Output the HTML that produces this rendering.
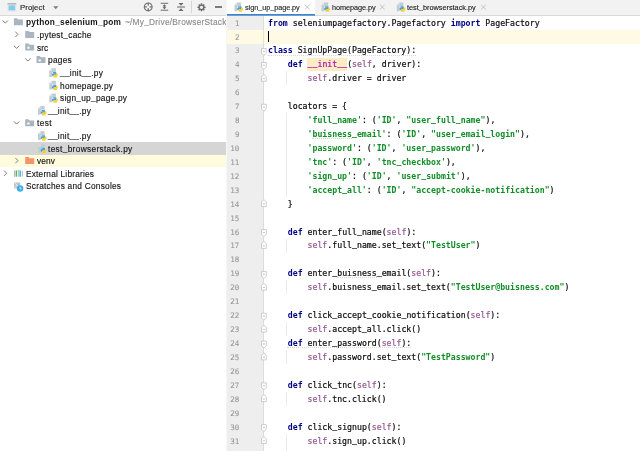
<!DOCTYPE html>
<html><head><meta charset="utf-8"><title>PyCharm</title>
<style>
html,body{margin:0;padding:0;}
body{width:640px;height:451px;overflow:hidden;background:#fff;position:relative;font-family:"Liberation Sans",sans-serif;}
.abs{position:absolute;}
svg{position:absolute;overflow:visible;}
#left{position:absolute;left:0;top:0;width:226px;height:451px;background:#fff;overflow:hidden;}
#ltool{position:absolute;left:0;top:0;width:226px;height:15px;background:#f2f2f2;border-bottom:1px solid #d9d9d9;}
.row{position:absolute;left:0;width:226px;height:12.6px;}
.lbl{-webkit-text-stroke:0.15px;will-change:transform;position:absolute;white-space:nowrap;font-size:8.3px;letter-spacing:0.2px;line-height:12.6px;color:#151515;top:0.5px;margin-left:-0.35px;}
.lbl b{font-weight:bold;-webkit-text-stroke:0;letter-spacing:0.25px;}
.lbl .g{color:#8c8c8c;}
#div{position:absolute;left:226px;top:0;width:1px;height:451px;background:#f6f6f6;}
#ed{position:absolute;left:227px;top:0;width:413px;height:451px;background:#fff;overflow:hidden;}
#tabs{position:absolute;left:0;top:0;width:413px;height:15px;background:#f2f2f2;border-bottom:1px solid #d9d9d9;}
.tab{-webkit-text-stroke:0.12px;will-change:transform;position:absolute;height:14px;font-size:7.3px;letter-spacing:-0.06px;line-height:14px;top:0.5px;color:#1c1c1c;white-space:nowrap;}
.x{position:absolute;top:0;font-size:9px;line-height:14px;color:#b0b0b0;}
#gut{position:absolute;left:0;top:16px;width:36px;height:436px;background:#eeeeee;border-right:1px solid #dcdcdc;}
.ln{position:absolute;left:0;width:12.4px;text-align:right;font-family:"DejaVu Sans Mono","Liberation Mono",monospace;font-size:7.5px;color:#999;-webkit-text-stroke:0.1px;white-space:nowrap;will-change:transform;}
.cl{-webkit-text-stroke:0.2px;position:absolute;left:40.85px;will-change:transform;white-space:pre;font-family:"DejaVu Sans Mono","Liberation Mono",monospace;font-size:8.21px;color:#0c0c0c;height:13.93px;line-height:13.93px;}
i{font-style:normal;position:relative;top:-1.1px;}
.lbl i,.tab i{top:-0.9px;}
.lbl b i{top:-0.3px;}
.kw{color:#000080;font-weight:bold;-webkit-text-stroke:0;}
.s{color:#128c28;font-weight:bold;-webkit-text-stroke:0;}
.self{color:#94558d;}
.init{color:#b200b2;}
</style></head><body>
<div id="left"><div id="ltool">
<svg style="left:7px;top:3px" width="9" height="9" viewBox="0 0 9 9"><g transform="translate(0.60 0.00)"><rect x="0" y="0" width="8.6" height="8.5" fill="#dfe4e8"/><rect x="0" y="0" width="8.6" height="1.5" fill="#aeb9c1"/><rect x="1.2" y="2.5" width="6.2" height="4.7" fill="#7fcdec"/></g></svg>
<div class="lbl" style="left:20px;top:1.7px;color:#2a2a2a;font-size:7.8px;letter-spacing:0.05px">Project</div>
<svg style="left:53px;top:6px" width="6" height="4" viewBox="0 0 6 4"><g transform="translate(0.00 0.00)"><path d="M0.3 0.3H5.3L2.8 3.2Z" fill="#7a7a7a"/></g></svg>
<svg style="left:143px;top:2px" width="9" height="9" viewBox="0 0 9 9"><g transform="translate(0.70 0.40)"><circle cx="4.5" cy="4.5" r="3.95" fill="none" stroke="#6e6e6e" stroke-width="1.05"/><path d="M4.5 0.6V3.1M4.5 5.9V8.4M0.6 4.5H3.1M5.9 4.5H8.4" stroke="#6e6e6e" stroke-width="1.3"/></g></svg>
<svg style="left:160px;top:2px" width="8" height="8" viewBox="0 0 8 8"><g transform="translate(0.70 0.80)"><path d="M0 0.5H7.5M0 7.4H7.5" stroke="#6e6e6e" stroke-width="1"/><path d="M3.75 1.5L5.7 3.5H4.5V4.4H5.7L3.75 6.4L1.8 4.4H3V3.5H1.8Z" fill="#6e6e6e"/></g></svg>
<svg style="left:177px;top:2px" width="8" height="9" viewBox="0 0 8 9"><g transform="translate(0.10 0.50)"><path d="M0 4.5H7.8" stroke="#6e6e6e" stroke-width="1.1"/><path d="M3.9 3.3L6.1 1.1V0.5H1.7V1.1ZM3.9 5.7L6.1 7.9V8.5H1.7V7.9Z" fill="#6e6e6e"/></g></svg>
<div class="abs" style="left:191px;top:1px;width:1px;height:12px;background:#d6d6d6"></div>
<svg style="left:197px;top:2px" width="9" height="9" viewBox="0 0 9 9"><g transform="translate(0.00 0.80)"><path d="M3.81 0.46L5.19 0.46L5.33 1.62L5.95 1.88L6.87 1.15L7.85 2.13L7.12 3.05L7.38 3.67L8.54 3.81L8.54 5.19L7.38 5.33L7.12 5.95L7.85 6.87L6.87 7.85L5.95 7.12L5.33 7.38L5.19 8.54L3.81 8.54L3.67 7.38L3.05 7.12L2.13 7.85L1.15 6.87L1.88 5.95L1.62 5.33L0.46 5.19L0.46 3.81L1.62 3.67L1.88 3.05L1.15 2.13L2.13 1.15L3.05 1.88L3.67 1.62Z M4.5 2.9A1.6 1.6 0 1 0 4.5 6.1A1.6 1.6 0 1 0 4.5 2.9Z" fill="#6e6e6e" fill-rule="evenodd"/></g></svg>
<div class="abs" style="left:214.5px;top:6.2px;width:7.7px;height:1.4px;background:#7c7c7c"></div>
</div>
<svg style="left:2px;top:20px" width="6" height="4" viewBox="0 0 6 4"><g transform="translate(0.30 0.05)"><path d="M0.3 0.4L3 3.1L5.7 0.4" fill="none" stroke="#757575" stroke-width="0.95"/></g></svg>
<svg style="left:13px;top:18px" width="9" height="7" viewBox="0 0 9 7"><g transform="translate(0.90 0.26)"><path d="M0 0H3.3L4.4 1.2H9V7H0Z" fill="#aab6bf"/></g></svg>
<div class="lbl" style="left:26.00px;top:16.40px;letter-spacing:0.20px"><b>python<i>_</i>selenium<i>_</i>pom</b> <span class="g" style="margin-left:1.3px;letter-spacing:0.26px">~/My<i>_</i>Drive/BrowserStack,</span></div>
<svg style="left:14px;top:31px" width="4" height="6" viewBox="0 0 4 6"><g transform="translate(0.90 0.37)"><path d="M0.4 0.3L3.1 3L0.4 5.7" fill="none" stroke="#757575" stroke-width="0.95"/></g></svg>
<svg style="left:25px;top:30px" width="9" height="7" viewBox="0 0 9 7"><g transform="translate(0.20 0.88)"><path d="M0 0H3.3L4.4 1.2H9V7H0Z" fill="#aab6bf"/></g></svg>
<div class="lbl" style="left:37.35px;top:29.02px;letter-spacing:0.27px">.pytest<i>_</i>cache</div>
<svg style="left:13px;top:45px" width="6" height="4" viewBox="0 0 6 4"><g transform="translate(0.60 0.29)"><path d="M0.3 0.4L3 3.1L5.7 0.4" fill="none" stroke="#757575" stroke-width="0.95"/></g></svg>
<svg style="left:25px;top:43px" width="9" height="7" viewBox="0 0 9 7"><g transform="translate(0.20 0.50)"><path d="M0 0H3.3L4.4 1.2H9V7H0Z" fill="#aab6bf"/><rect x="2.2" y="3.2" width="2.1" height="2.1" fill="#fff"/></g></svg>
<div class="lbl" style="left:37.35px;top:41.64px;letter-spacing:0.10px">src</div>
<svg style="left:24px;top:57px" width="6" height="4" viewBox="0 0 6 4"><g transform="translate(0.90 0.91)"><path d="M0.3 0.4L3 3.1L5.7 0.4" fill="none" stroke="#757575" stroke-width="0.95"/></g></svg>
<svg style="left:36px;top:56px" width="9" height="7" viewBox="0 0 9 7"><g transform="translate(0.50 0.12)"><path d="M0 0H3.3L4.4 1.2H9V7H0Z" fill="#aab6bf"/><rect x="2.2" y="3.2" width="2.1" height="2.1" fill="#fff"/></g></svg>
<div class="lbl" style="left:48.70px;top:54.26px;letter-spacing:0.27px">pages</div>
<svg style="left:49px;top:68px" width="9" height="10" viewBox="0 0 9 10"><g transform="translate(0.10 0.00)"><path d="M0.2 2.8L2.8 0.2H6.8V4H3V8.9H0.2Z" fill="#c3ccd3"/><path d="M2.9 0.2V2.9H0.2Z" fill="#dde3e7"/><g transform="translate(0.6 0.9) scale(0.9)"><path d="M4.3 3.5H6.4Q7.5 3.5 7.5 4.6V5.6Q7.5 6.6 6.4 6.6H5Q4.4 6.6 4.4 7.2V7.9H3.6Q2.5 7.9 2.5 6.8V6.1Q2.5 5 3.6 5H5.2V4.7H3.3V4.5Q3.3 3.5 4.3 3.5Z" fill="#47a3dc"/><path d="M7.7 5.1H8Q9 5.1 9 6.2V6.9Q9 8 7.9 8H6.3V8.3H8.2V8.6Q8.2 9.6 7.2 9.6H5.1Q4 9.6 4 8.5V7.5Q4 6.5 5.1 6.5H6.5Q7.1 6.5 7.1 5.9V5.1Z" fill="#fbce2f"/></g></g></svg>
<div class="lbl" style="left:60.05px;top:66.88px;letter-spacing:0.27px"><i>_</i><i>_</i>init<i>_</i><i>_</i>.py</div>
<svg style="left:49px;top:80px" width="9" height="10" viewBox="0 0 9 10"><g transform="translate(0.10 0.62)"><path d="M0.2 2.8L2.8 0.2H6.8V4H3V8.9H0.2Z" fill="#c3ccd3"/><path d="M2.9 0.2V2.9H0.2Z" fill="#dde3e7"/><g transform="translate(0.6 0.9) scale(0.9)"><path d="M4.3 3.5H6.4Q7.5 3.5 7.5 4.6V5.6Q7.5 6.6 6.4 6.6H5Q4.4 6.6 4.4 7.2V7.9H3.6Q2.5 7.9 2.5 6.8V6.1Q2.5 5 3.6 5H5.2V4.7H3.3V4.5Q3.3 3.5 4.3 3.5Z" fill="#47a3dc"/><path d="M7.7 5.1H8Q9 5.1 9 6.2V6.9Q9 8 7.9 8H6.3V8.3H8.2V8.6Q8.2 9.6 7.2 9.6H5.1Q4 9.6 4 8.5V7.5Q4 6.5 5.1 6.5H6.5Q7.1 6.5 7.1 5.9V5.1Z" fill="#fbce2f"/></g></g></svg>
<div class="lbl" style="left:60.05px;top:79.50px;letter-spacing:0.27px">homepage.py</div>
<svg style="left:49px;top:93px" width="9" height="10" viewBox="0 0 9 10"><g transform="translate(0.10 0.24)"><path d="M0.2 2.8L2.8 0.2H6.8V4H3V8.9H0.2Z" fill="#c3ccd3"/><path d="M2.9 0.2V2.9H0.2Z" fill="#dde3e7"/><g transform="translate(0.6 0.9) scale(0.9)"><path d="M4.3 3.5H6.4Q7.5 3.5 7.5 4.6V5.6Q7.5 6.6 6.4 6.6H5Q4.4 6.6 4.4 7.2V7.9H3.6Q2.5 7.9 2.5 6.8V6.1Q2.5 5 3.6 5H5.2V4.7H3.3V4.5Q3.3 3.5 4.3 3.5Z" fill="#47a3dc"/><path d="M7.7 5.1H8Q9 5.1 9 6.2V6.9Q9 8 7.9 8H6.3V8.3H8.2V8.6Q8.2 9.6 7.2 9.6H5.1Q4 9.6 4 8.5V7.5Q4 6.5 5.1 6.5H6.5Q7.1 6.5 7.1 5.9V5.1Z" fill="#fbce2f"/></g></g></svg>
<div class="lbl" style="left:60.05px;top:92.12px;letter-spacing:0.27px">sign<i>_</i>up<i>_</i>page.py</div>
<svg style="left:37px;top:105px" width="9" height="10" viewBox="0 0 9 10"><g transform="translate(0.80 0.86)"><path d="M0.2 2.8L2.8 0.2H6.8V4H3V8.9H0.2Z" fill="#c3ccd3"/><path d="M2.9 0.2V2.9H0.2Z" fill="#dde3e7"/><g transform="translate(0.6 0.9) scale(0.9)"><path d="M4.3 3.5H6.4Q7.5 3.5 7.5 4.6V5.6Q7.5 6.6 6.4 6.6H5Q4.4 6.6 4.4 7.2V7.9H3.6Q2.5 7.9 2.5 6.8V6.1Q2.5 5 3.6 5H5.2V4.7H3.3V4.5Q3.3 3.5 4.3 3.5Z" fill="#47a3dc"/><path d="M7.7 5.1H8Q9 5.1 9 6.2V6.9Q9 8 7.9 8H6.3V8.3H8.2V8.6Q8.2 9.6 7.2 9.6H5.1Q4 9.6 4 8.5V7.5Q4 6.5 5.1 6.5H6.5Q7.1 6.5 7.1 5.9V5.1Z" fill="#fbce2f"/></g></g></svg>
<div class="lbl" style="left:48.70px;top:104.74px;letter-spacing:0.27px"><i>_</i><i>_</i>init<i>_</i><i>_</i>.py</div>
<svg style="left:13px;top:121px" width="6" height="4" viewBox="0 0 6 4"><g transform="translate(0.60 0.01)"><path d="M0.3 0.4L3 3.1L5.7 0.4" fill="none" stroke="#757575" stroke-width="0.95"/></g></svg>
<svg style="left:25px;top:119px" width="9" height="7" viewBox="0 0 9 7"><g transform="translate(0.20 0.22)"><path d="M0 0H3.3L4.4 1.2H9V7H0Z" fill="#aab6bf"/><rect x="2.2" y="3.2" width="2.1" height="2.1" fill="#fff"/></g></svg>
<div class="lbl" style="left:37.35px;top:117.36px;letter-spacing:0.40px">test</div>
<svg style="left:37px;top:131px" width="9" height="10" viewBox="0 0 9 10"><g transform="translate(0.80 0.10)"><path d="M0.2 2.8L2.8 0.2H6.8V4H3V8.9H0.2Z" fill="#c3ccd3"/><path d="M2.9 0.2V2.9H0.2Z" fill="#dde3e7"/><g transform="translate(0.6 0.9) scale(0.9)"><path d="M4.3 3.5H6.4Q7.5 3.5 7.5 4.6V5.6Q7.5 6.6 6.4 6.6H5Q4.4 6.6 4.4 7.2V7.9H3.6Q2.5 7.9 2.5 6.8V6.1Q2.5 5 3.6 5H5.2V4.7H3.3V4.5Q3.3 3.5 4.3 3.5Z" fill="#47a3dc"/><path d="M7.7 5.1H8Q9 5.1 9 6.2V6.9Q9 8 7.9 8H6.3V8.3H8.2V8.6Q8.2 9.6 7.2 9.6H5.1Q4 9.6 4 8.5V7.5Q4 6.5 5.1 6.5H6.5Q7.1 6.5 7.1 5.9V5.1Z" fill="#fbce2f"/></g></g></svg>
<div class="lbl" style="left:48.70px;top:129.98px;letter-spacing:0.27px"><i>_</i><i>_</i>init<i>_</i><i>_</i>.py</div>
<div class="row" style="top:142.10px;background:#d5d5d5"></div>
<svg style="left:37px;top:143px" width="9" height="10" viewBox="0 0 9 10"><g transform="translate(0.80 0.72)"><path d="M0.2 2.8L2.8 0.2H6.8V4H3V8.9H0.2Z" fill="#c3ccd3"/><path d="M2.9 0.2V2.9H0.2Z" fill="#dde3e7"/><g transform="translate(0.6 0.9) scale(0.9)"><path d="M4.3 3.5H6.4Q7.5 3.5 7.5 4.6V5.6Q7.5 6.6 6.4 6.6H5Q4.4 6.6 4.4 7.2V7.9H3.6Q2.5 7.9 2.5 6.8V6.1Q2.5 5 3.6 5H5.2V4.7H3.3V4.5Q3.3 3.5 4.3 3.5Z" fill="#47a3dc"/><path d="M7.7 5.1H8Q9 5.1 9 6.2V6.9Q9 8 7.9 8H6.3V8.3H8.2V8.6Q8.2 9.6 7.2 9.6H5.1Q4 9.6 4 8.5V7.5Q4 6.5 5.1 6.5H6.5Q7.1 6.5 7.1 5.9V5.1Z" fill="#fbce2f"/></g></g></svg>
<div class="lbl" style="left:48.70px;top:142.60px;letter-spacing:0.33px">test<i>_</i>browserstack.py</div>
<div class="row" style="top:154.72px;background:#fffcdd"></div>
<svg style="left:14px;top:157px" width="4" height="6" viewBox="0 0 4 6"><g transform="translate(0.90 0.57)"><path d="M0.4 0.3L3.1 3L0.4 5.7" fill="none" stroke="#757575" stroke-width="0.95"/></g></svg>
<svg style="left:25px;top:157px" width="9" height="7" viewBox="0 0 9 7"><g transform="translate(0.20 0.08)"><path d="M0 0H3.3L4.4 1.2H9V7H0Z" fill="#f3946b"/></g></svg>
<div class="lbl" style="left:37.35px;top:155.22px;letter-spacing:0.10px">venv</div>
<svg style="left:3px;top:170px" width="4" height="6" viewBox="0 0 4 6"><g transform="translate(0.60 0.19)"><path d="M0.4 0.3L3.1 3L0.4 5.7" fill="none" stroke="#757575" stroke-width="0.95"/></g></svg>
<svg style="left:13px;top:169px" width="10" height="8" viewBox="0 0 10 8"><g transform="translate(0.90 0.54)"><rect x="0.1" y="0.9" width="0.9" height="6.3" fill="#a7b2ba"/><rect x="1.7" y="0.9" width="1.5" height="6.3" fill="#62b543"/><rect x="3.9" y="0.2" width="0.9" height="7" fill="#a7b2ba"/><rect x="5.5" y="0.9" width="1.5" height="6.3" fill="#40b6e0"/><rect x="7.9" y="1.5" width="0.9" height="5.7" fill="#a7b2ba"/></g></svg>
<div class="lbl" style="left:26.00px;top:167.84px;letter-spacing:0.20px">External Libraries</div>
<svg style="left:13px;top:182px" width="10" height="10" viewBox="0 0 10 10"><g transform="translate(0.90 0.26)"><path d="M0.2 0.3H6.3V3.5L3 6.3H0.2Z" fill="#b9c3cb"/><path d="M1 1L3.6 3.2L1 5.4" fill="none" stroke="#fff" stroke-width="0.7"/><circle cx="6.2" cy="6.3" r="3.2" fill="#3daee4"/><path d="M6.2 4.6V6.5H7.6" fill="none" stroke="#fff" stroke-width="0.8"/></g></svg>
<div class="lbl" style="left:26.00px;top:180.46px;letter-spacing:0.24px">Scratches and Consoles</div>
</div><div id="div"></div>
<div id="ed"><div id="tabs">
<div class="abs" style="left:0;top:0;width:88px;height:14px;background:#fff"></div>
<div class="abs" style="left:0;top:14px;width:88px;height:1px;background:#3f82c8"></div><div class="abs" style="left:0;top:15px;width:88px;height:1px;background:#6b9fd6"></div>
<svg style="left:7px;top:2px" width="9" height="10" viewBox="0 0 9 10"><g transform="translate(0.30 0.30)"><path d="M0.2 2.8L2.8 0.2H6.8V4H3V8.9H0.2Z" fill="#c3ccd3"/><path d="M2.9 0.2V2.9H0.2Z" fill="#dde3e7"/><g transform="translate(0.6 0.9) scale(0.9)"><path d="M4.3 3.5H6.4Q7.5 3.5 7.5 4.6V5.6Q7.5 6.6 6.4 6.6H5Q4.4 6.6 4.4 7.2V7.9H3.6Q2.5 7.9 2.5 6.8V6.1Q2.5 5 3.6 5H5.2V4.7H3.3V4.5Q3.3 3.5 4.3 3.5Z" fill="#47a3dc"/><path d="M7.7 5.1H8Q9 5.1 9 6.2V6.9Q9 8 7.9 8H6.3V8.3H8.2V8.6Q8.2 9.6 7.2 9.6H5.1Q4 9.6 4 8.5V7.5Q4 6.5 5.1 6.5H6.5Q7.1 6.5 7.1 5.9V5.1Z" fill="#fbce2f"/></g></g></svg>
<div class="tab" style="left:18.30px">sign<i>_</i>up<i>_</i>page.py</div>
<svg style="left:77px;top:4px" width="5" height="5" viewBox="0 0 5 5"><g transform="translate(0.70 0.60)"><path d="M0.2 0.2L4.8 4.8M4.8 0.2L0.2 4.8" stroke="#b8b8b8" stroke-width="0.8"/></g></svg>
<svg style="left:94px;top:2px" width="9" height="10" viewBox="0 0 9 10"><g transform="translate(0.30 0.30)"><path d="M0.2 2.8L2.8 0.2H6.8V4H3V8.9H0.2Z" fill="#c3ccd3"/><path d="M2.9 0.2V2.9H0.2Z" fill="#dde3e7"/><g transform="translate(0.6 0.9) scale(0.9)"><path d="M4.3 3.5H6.4Q7.5 3.5 7.5 4.6V5.6Q7.5 6.6 6.4 6.6H5Q4.4 6.6 4.4 7.2V7.9H3.6Q2.5 7.9 2.5 6.8V6.1Q2.5 5 3.6 5H5.2V4.7H3.3V4.5Q3.3 3.5 4.3 3.5Z" fill="#47a3dc"/><path d="M7.7 5.1H8Q9 5.1 9 6.2V6.9Q9 8 7.9 8H6.3V8.3H8.2V8.6Q8.2 9.6 7.2 9.6H5.1Q4 9.6 4 8.5V7.5Q4 6.5 5.1 6.5H6.5Q7.1 6.5 7.1 5.9V5.1Z" fill="#fbce2f"/></g></g></svg>
<div class="tab" style="left:105.10px">homepage.py</div>
<svg style="left:152px;top:4px" width="5" height="5" viewBox="0 0 5 5"><g transform="translate(0.80 0.60)"><path d="M0.2 0.2L4.8 4.8M4.8 0.2L0.2 4.8" stroke="#b8b8b8" stroke-width="0.8"/></g></svg>
<svg style="left:169px;top:2px" width="9" height="10" viewBox="0 0 9 10"><g transform="translate(0.60 0.30)"><path d="M0.2 2.8L2.8 0.2H6.8V4H3V8.9H0.2Z" fill="#c3ccd3"/><path d="M2.9 0.2V2.9H0.2Z" fill="#dde3e7"/><g transform="translate(0.6 0.9) scale(0.9)"><path d="M4.3 3.5H6.4Q7.5 3.5 7.5 4.6V5.6Q7.5 6.6 6.4 6.6H5Q4.4 6.6 4.4 7.2V7.9H3.6Q2.5 7.9 2.5 6.8V6.1Q2.5 5 3.6 5H5.2V4.7H3.3V4.5Q3.3 3.5 4.3 3.5Z" fill="#47a3dc"/><path d="M7.7 5.1H8Q9 5.1 9 6.2V6.9Q9 8 7.9 8H6.3V8.3H8.2V8.6Q8.2 9.6 7.2 9.6H5.1Q4 9.6 4 8.5V7.5Q4 6.5 5.1 6.5H6.5Q7.1 6.5 7.1 5.9V5.1Z" fill="#fbce2f"/></g></g></svg>
<div class="tab" style="left:180.30px;letter-spacing:0.01px">test<i>_</i>browserstack.py</div>
<svg style="left:254px;top:4px" width="5" height="5" viewBox="0 0 5 5"><g transform="translate(0.00 0.60)"><path d="M0.2 0.2L4.8 4.8M4.8 0.2L0.2 4.8" stroke="#b8b8b8" stroke-width="0.8"/></g></svg>
</div><div id="gut"></div>
<div class="abs" style="left:0;top:29.63px;width:413px;height:13.93px;background:#fffae3"></div>
<div class="abs" style="left:36px;top:29.63px;width:1px;height:13.93px;background:#e6e3d2"></div>
<div class="abs" style="left:40.8px;top:30.93px;width:1.1px;height:11.4px;background:#000"></div>
<div class="abs" style="left:80.19px;top:57.59px;width:39.74px;height:13.73px;background:#fbecc3"></div>
<div class="abs" style="left:41px;top:55.16px;width:148px;height:0;border-top:1px dotted #d8d8d8"></div>
<div class="abs" style="left:85.34px;top:137.74px;width:39.54px;height:0;border-top:1px dotted #c4e0c4"></div>
<div class="abs" style="left:110.05px;top:277.04px;width:39.54px;height:0;border-top:1px dotted #c4e0c4"></div>
<div class="abs" style="left:60.12px;top:347.09px;width:124.07px;height:0;border-top:1px dotted #d8d8d8"></div>
<div class="abs" style="left:59.32px;top:71.42px;width:1px;height:13.93px;background:#ebebeb"></div>
<div class="abs" style="left:59.32px;top:113.21px;width:1px;height:83.58px;background:#ebebeb"></div>
<div class="abs" style="left:59.32px;top:238.58px;width:1px;height:13.93px;background:#ebebeb"></div>
<div class="abs" style="left:59.32px;top:280.37px;width:1px;height:13.93px;background:#ebebeb"></div>
<div class="abs" style="left:59.32px;top:322.16px;width:1px;height:13.93px;background:#ebebeb"></div>
<div class="abs" style="left:59.32px;top:350.02px;width:1px;height:13.93px;background:#ebebeb"></div>
<div class="abs" style="left:59.32px;top:391.81px;width:1px;height:13.93px;background:#ebebeb"></div>
<div class="abs" style="left:59.32px;top:433.60px;width:1px;height:27.86px;background:#ebebeb"></div>
<div class="ln" style="top:16.60px;line-height:13.93px;height:13.93px">1</div>
<div class="cl" style="top:16.60px"><span class="kw">from</span> seleniumpagefactory.Pagefactory <span class="kw">import</span> PageFactory</div>
<div class="ln" style="top:30.53px;line-height:13.93px;height:13.93px">2</div>
<div class="ln" style="top:44.46px;line-height:13.93px;height:13.93px">3</div>
<div class="cl" style="top:44.46px"><span class="kw">class</span> SignUpPage(PageFactory):</div>
<div class="ln" style="top:58.39px;line-height:13.93px;height:13.93px">4</div>
<div class="cl" style="top:58.39px">    <span class="kw">def</span> <span class="init"><i>_</i><i>_</i>init<i>_</i><i>_</i></span>(<span class="self">self</span>, driver):</div>
<div class="ln" style="top:72.32px;line-height:13.93px;height:13.93px">5</div>
<div class="cl" style="top:72.32px">        <span class="self">self</span>.driver = driver</div>
<div class="ln" style="top:86.25px;line-height:13.93px;height:13.93px">6</div>
<div class="ln" style="top:100.18px;line-height:13.93px;height:13.93px">7</div>
<div class="cl" style="top:100.18px">    locators = {</div>
<div class="ln" style="top:114.11px;line-height:13.93px;height:13.93px">8</div>
<div class="cl" style="top:114.11px">        <span class="s">'full<i>_</i>name'</span>: (<span class="s">'ID'</span>, <span class="s">"user<i>_</i>full<i>_</i>name"</span>),</div>
<div class="ln" style="top:128.04px;line-height:13.93px;height:13.93px">9</div>
<div class="cl" style="top:128.04px">        <span class="s">'buisness<i>_</i>email'</span>: (<span class="s">'ID'</span>, <span class="s">"user<i>_</i>email<i>_</i>login"</span>),</div>
<div class="ln" style="top:141.97px;line-height:13.93px;height:13.93px">10</div>
<div class="cl" style="top:141.97px">        <span class="s">'password'</span>: (<span class="s">'ID'</span>, <span class="s">'user<i>_</i>password'</span>),</div>
<div class="ln" style="top:155.90px;line-height:13.93px;height:13.93px">11</div>
<div class="cl" style="top:155.90px">        <span class="s">'tnc'</span>: (<span class="s">'ID'</span>, <span class="s">'tnc<i>_</i>checkbox'</span>),</div>
<div class="ln" style="top:169.83px;line-height:13.93px;height:13.93px">12</div>
<div class="cl" style="top:169.83px">        <span class="s">'sign<i>_</i>up'</span>: (<span class="s">'ID'</span>, <span class="s">'user<i>_</i>submit'</span>),</div>
<div class="ln" style="top:183.76px;line-height:13.93px;height:13.93px">13</div>
<div class="cl" style="top:183.76px">        <span class="s">'accept<i>_</i>all'</span>: (<span class="s">'ID'</span>, <span class="s">"accept-cookie-notification"</span>)</div>
<div class="ln" style="top:197.69px;line-height:13.93px;height:13.93px">14</div>
<div class="cl" style="top:197.69px">    }</div>
<div class="ln" style="top:211.62px;line-height:13.93px;height:13.93px">15</div>
<div class="ln" style="top:225.55px;line-height:13.93px;height:13.93px">16</div>
<div class="cl" style="top:225.55px">    <span class="kw">def</span> enter<i>_</i>full<i>_</i>name(<span class="self">self</span>):</div>
<div class="ln" style="top:239.48px;line-height:13.93px;height:13.93px">17</div>
<div class="cl" style="top:239.48px">        <span class="self">self</span>.full<i>_</i>name.set<i>_</i>text(<span class="s">"TestUser"</span>)</div>
<div class="ln" style="top:253.41px;line-height:13.93px;height:13.93px">18</div>
<div class="ln" style="top:267.34px;line-height:13.93px;height:13.93px">19</div>
<div class="cl" style="top:267.34px">    <span class="kw">def</span> enter<i>_</i>buisness<i>_</i>email(<span class="self">self</span>):</div>
<div class="ln" style="top:281.27px;line-height:13.93px;height:13.93px">20</div>
<div class="cl" style="top:281.27px">        <span class="self">self</span>.buisness<i>_</i>email.set<i>_</i>text(<span class="s">"TestUser@buisness.com"</span>)</div>
<div class="ln" style="top:295.20px;line-height:13.93px;height:13.93px">21</div>
<div class="ln" style="top:309.13px;line-height:13.93px;height:13.93px">22</div>
<div class="cl" style="top:309.13px">    <span class="kw">def</span> click<i>_</i>accept<i>_</i>cookie<i>_</i>notification(<span class="self">self</span>):</div>
<div class="ln" style="top:323.06px;line-height:13.93px;height:13.93px">23</div>
<div class="cl" style="top:323.06px">        <span class="self">self</span>.accept<i>_</i>all.click()</div>
<div class="ln" style="top:336.99px;line-height:13.93px;height:13.93px">24</div>
<div class="cl" style="top:336.99px">    <span class="kw">def</span> enter<i>_</i>password(<span class="self">self</span>):</div>
<div class="ln" style="top:350.92px;line-height:13.93px;height:13.93px">25</div>
<div class="cl" style="top:350.92px">        <span class="self">self</span>.password.set<i>_</i>text(<span class="s">"TestPassword"</span>)</div>
<div class="ln" style="top:364.85px;line-height:13.93px;height:13.93px">26</div>
<div class="ln" style="top:378.78px;line-height:13.93px;height:13.93px">27</div>
<div class="cl" style="top:378.78px">    <span class="kw">def</span> click<i>_</i>tnc(<span class="self">self</span>):</div>
<div class="ln" style="top:392.71px;line-height:13.93px;height:13.93px">28</div>
<div class="cl" style="top:392.71px">        <span class="self">self</span>.tnc.click()</div>
<div class="ln" style="top:406.64px;line-height:13.93px;height:13.93px">29</div>
<div class="ln" style="top:420.57px;line-height:13.93px;height:13.93px">30</div>
<div class="cl" style="top:420.57px">    <span class="kw">def</span> click<i>_</i>signup(<span class="self">self</span>):</div>
<div class="ln" style="top:434.50px;line-height:13.93px;height:13.93px">31</div>
<div class="cl" style="top:434.50px">        <span class="self">self</span>.sign<i>_</i>up.click()</div>
<svg style="left:34px;top:48px" width="6" height="8" viewBox="0 0 6 8"><g transform="translate(0.10 0.16)"><path d="M0.4 0.4H5.2V5L2.8 7.4L0.4 5Z" fill="#fff" stroke="#c0c0c0" stroke-width="0.8"/><path d="M1.7 3.2H3.9" stroke="#b4b4b4" stroke-width="0.75"/></g></svg>
<svg style="left:34px;top:62px" width="6" height="8" viewBox="0 0 6 8"><g transform="translate(0.10 0.09)"><path d="M0.4 0.4H5.2V5L2.8 7.4L0.4 5Z" fill="#fff" stroke="#c0c0c0" stroke-width="0.8"/><path d="M1.7 3.2H3.9" stroke="#b4b4b4" stroke-width="0.75"/></g></svg>
<svg style="left:34px;top:103px" width="6" height="8" viewBox="0 0 6 8"><g transform="translate(0.10 0.88)"><path d="M0.4 0.4H5.2V5L2.8 7.4L0.4 5Z" fill="#fff" stroke="#c0c0c0" stroke-width="0.8"/><path d="M1.7 3.2H3.9" stroke="#b4b4b4" stroke-width="0.75"/></g></svg>
<svg style="left:34px;top:229px" width="6" height="8" viewBox="0 0 6 8"><g transform="translate(0.10 0.25)"><path d="M0.4 0.4H5.2V5L2.8 7.4L0.4 5Z" fill="#fff" stroke="#c0c0c0" stroke-width="0.8"/><path d="M1.7 3.2H3.9" stroke="#b4b4b4" stroke-width="0.75"/></g></svg>
<svg style="left:34px;top:271px" width="6" height="8" viewBox="0 0 6 8"><g transform="translate(0.10 0.04)"><path d="M0.4 0.4H5.2V5L2.8 7.4L0.4 5Z" fill="#fff" stroke="#c0c0c0" stroke-width="0.8"/><path d="M1.7 3.2H3.9" stroke="#b4b4b4" stroke-width="0.75"/></g></svg>
<svg style="left:34px;top:312px" width="6" height="8" viewBox="0 0 6 8"><g transform="translate(0.10 0.83)"><path d="M0.4 0.4H5.2V5L2.8 7.4L0.4 5Z" fill="#fff" stroke="#c0c0c0" stroke-width="0.8"/><path d="M1.7 3.2H3.9" stroke="#b4b4b4" stroke-width="0.75"/></g></svg>
<svg style="left:34px;top:340px" width="6" height="8" viewBox="0 0 6 8"><g transform="translate(0.10 0.69)"><path d="M0.4 0.4H5.2V5L2.8 7.4L0.4 5Z" fill="#fff" stroke="#c0c0c0" stroke-width="0.8"/><path d="M1.7 3.2H3.9" stroke="#b4b4b4" stroke-width="0.75"/></g></svg>
<svg style="left:34px;top:382px" width="6" height="8" viewBox="0 0 6 8"><g transform="translate(0.10 0.48)"><path d="M0.4 0.4H5.2V5L2.8 7.4L0.4 5Z" fill="#fff" stroke="#c0c0c0" stroke-width="0.8"/><path d="M1.7 3.2H3.9" stroke="#b4b4b4" stroke-width="0.75"/></g></svg>
<svg style="left:34px;top:424px" width="6" height="8" viewBox="0 0 6 8"><g transform="translate(0.10 0.27)"><path d="M0.4 0.4H5.2V5L2.8 7.4L0.4 5Z" fill="#fff" stroke="#c0c0c0" stroke-width="0.8"/><path d="M1.7 3.2H3.9" stroke="#b4b4b4" stroke-width="0.75"/></g></svg>
<svg style="left:34px;top:73px" width="6" height="8" viewBox="0 0 6 8"><g transform="translate(0.10 0.82)"><path d="M0.4 7.4H5.2V2.8L2.8 0.4L0.4 2.8Z" fill="#fff" stroke="#c0c0c0" stroke-width="0.8"/><path d="M1.7 4.8H3.9" stroke="#b4b4b4" stroke-width="0.75"/></g></svg>
<svg style="left:34px;top:199px" width="6" height="8" viewBox="0 0 6 8"><g transform="translate(0.10 0.19)"><path d="M0.4 7.4H5.2V2.8L2.8 0.4L0.4 2.8Z" fill="#fff" stroke="#c0c0c0" stroke-width="0.8"/><path d="M1.7 4.8H3.9" stroke="#b4b4b4" stroke-width="0.75"/></g></svg>
<svg style="left:34px;top:240px" width="6" height="8" viewBox="0 0 6 8"><g transform="translate(0.10 0.98)"><path d="M0.4 7.4H5.2V2.8L2.8 0.4L0.4 2.8Z" fill="#fff" stroke="#c0c0c0" stroke-width="0.8"/><path d="M1.7 4.8H3.9" stroke="#b4b4b4" stroke-width="0.75"/></g></svg>
<svg style="left:34px;top:282px" width="6" height="8" viewBox="0 0 6 8"><g transform="translate(0.10 0.77)"><path d="M0.4 7.4H5.2V2.8L2.8 0.4L0.4 2.8Z" fill="#fff" stroke="#c0c0c0" stroke-width="0.8"/><path d="M1.7 4.8H3.9" stroke="#b4b4b4" stroke-width="0.75"/></g></svg>
<svg style="left:34px;top:324px" width="6" height="8" viewBox="0 0 6 8"><g transform="translate(0.10 0.56)"><path d="M0.4 7.4H5.2V2.8L2.8 0.4L0.4 2.8Z" fill="#fff" stroke="#c0c0c0" stroke-width="0.8"/><path d="M1.7 4.8H3.9" stroke="#b4b4b4" stroke-width="0.75"/></g></svg>
<svg style="left:34px;top:352px" width="6" height="8" viewBox="0 0 6 8"><g transform="translate(0.10 0.42)"><path d="M0.4 7.4H5.2V2.8L2.8 0.4L0.4 2.8Z" fill="#fff" stroke="#c0c0c0" stroke-width="0.8"/><path d="M1.7 4.8H3.9" stroke="#b4b4b4" stroke-width="0.75"/></g></svg>
<svg style="left:34px;top:394px" width="6" height="8" viewBox="0 0 6 8"><g transform="translate(0.10 0.21)"><path d="M0.4 7.4H5.2V2.8L2.8 0.4L0.4 2.8Z" fill="#fff" stroke="#c0c0c0" stroke-width="0.8"/><path d="M1.7 4.8H3.9" stroke="#b4b4b4" stroke-width="0.75"/></g></svg>
<svg style="left:34px;top:436px" width="6" height="8" viewBox="0 0 6 8"><g transform="translate(0.10 0.00)"><path d="M0.4 7.4H5.2V2.8L2.8 0.4L0.4 2.8Z" fill="#fff" stroke="#c0c0c0" stroke-width="0.8"/><path d="M1.7 4.8H3.9" stroke="#b4b4b4" stroke-width="0.75"/></g></svg>
</div></body></html>
